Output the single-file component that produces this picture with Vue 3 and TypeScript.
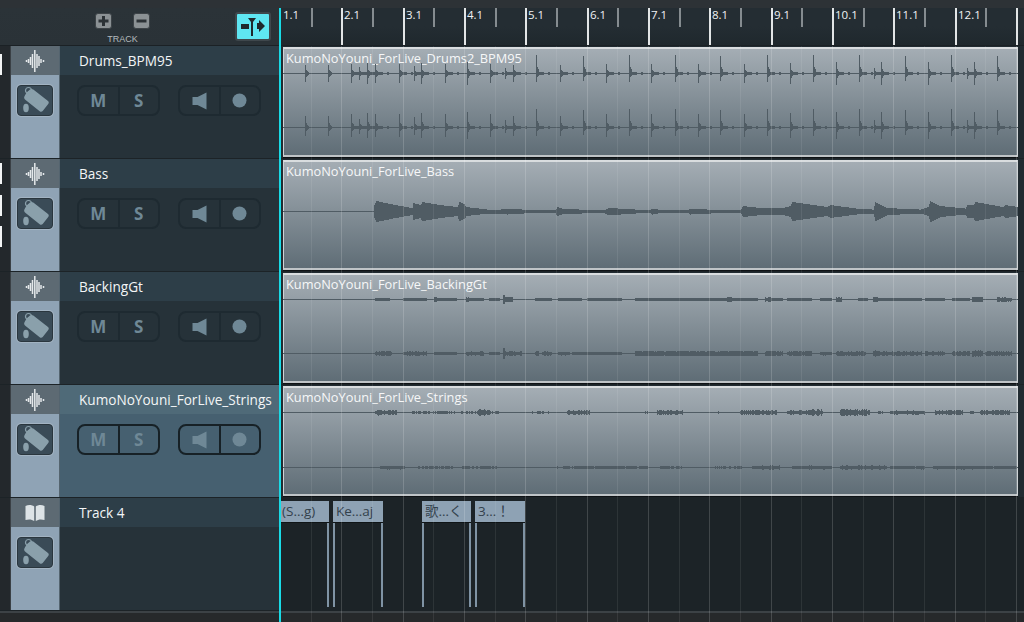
<script setup lang="ts">
type Seg = [number, number, number]
type Hit = [number, number]

const CLIP_X = 283
const CLIP_END = 1018
const BAR = 61.333

let seed = 7
const noise = (): number => {
  seed = (seed * 1103515245 + 12345) & 0x7fffffff
  return seed / 0x7fffffff
}

const toPath = (center: number, up: number[], down: number[] = up): string => {
  let d = `M0 ${center + 0.5}H${CLIP_END - CLIP_X}`
  up.forEach((a, i) => {
    const b = down[i]
    if (a >= 0.6 || b >= 0.6) d += `M${i + 0.5} ${(center - a).toFixed(1)}V${(center + b + 1).toFixed(1)}`
  })
  return d
}

const blank = (): number[] => new Array(CLIP_END - CLIP_X).fill(0)

const segWave = (center: number, segs: Seg[], scale: number, rough = 0.35): string => {
  const amps = blank()
  for (const [a, b, amp] of segs) {
    for (let x = a; x < b && x < CLIP_END; x++) {
      amps[x - CLIP_X] = Math.max(amps[x - CLIP_X], amp * scale * (1 - rough + noise() * rough * 2))
    }
  }
  return toPath(center, amps)
}

const envWave = (center: number, pts: Hit[]): string => {
  const amps = blank()
  for (let i = 0; i < pts.length - 1; i++) {
    const [x0, a0] = pts[i]
    const [x1, a1] = pts[i + 1]
    for (let x = x0; x < x1; x++) {
      if (x >= CLIP_X && x < CLIP_END) amps[x - CLIP_X] = a0 + ((a1 - a0) * (x - x0)) / (x1 - x0)
    }
  }
  return toPath(center, amps)
}

const hitWave = (center: number, hits: Hit[], low: number): string => {
  const up = blank()
  const down = blank()
  const put = (x: number, u: number, d: number) => {
    const i = x - CLIP_X
    if (i >= 0 && i < up.length) {
      up[i] = Math.max(up[i], u)
      down[i] = Math.max(down[i], d)
    }
  }
  hits.forEach(([x, a]) => {
    const strong = a >= 12
    const u = strong ? a * 1.4 : a * low
    const d = strong ? a * 0.62 : a * (low > 1 ? 0.95 : 1)
    put(x, u, d)
    put(x + 1, u * 0.35, d * 0.35)
    put(x + 2, u * 0.22, d * 0.22)
    put(x + 3, 1, 1)
    if (x >= 351) {
      for (let k = 4; k < 8; k++) put(x + k, 0.8, 0.8)
      put(x + 12, 0.8, 0.8)
      put(x + 13, 0.8, 0.8)
    }
  })
  return toPath(center, up, down)
}

const drumHits: Hit[] = [
  [305, 8], [328, 8], [351, 9], [359, 6], [367, 10], [375, 9], [399, 9], [414, 7], [421, 10], [445, 9],
  [467, 11], [490, 9], [505, 5], [513, 8], [536, 13], [560, 8], [583, 12], [606, 9], [629, 13], [651, 9],
  [675, 13], [698, 9], [720, 12], [744, 9], [767, 13], [790, 10], [813, 13], [836, 11], [859, 13], [874, 5],
  [881, 11], [905, 12], [928, 11], [951, 13], [967, 5], [974, 11], [997, 12],
]

const bassEnv: Hit[] = [
  [373, 0], [374, 6], [376, 10], [395, 6], [412, 3], [413, 8], [420, 6], [422, 9], [440, 6], [457, 4],
  [459, 9], [464, 7], [466, 4], [487, 1.5], [500, 1.5], [507, 2.5], [530, 1], [555, 1], [557, 4], [563, 2],
  [597, 1], [605, 1.5], [608, 3], [630, 2], [640, 1], [650, 1], [652, 2.5], [660, 1], [688, 1], [690, 2.5],
  [707, 1.5], [740, 1], [743, 5], [760, 3], [783, 3], [790, 5], [792, 9], [827, 4], [830, 6], [837, 5],
  [860, 2], [873, 1.5], [875, 9], [887, 3], [920, 1.5], [928, 4], [930, 10], [940, 5], [965, 2.5], [967, 6],
  [973, 6], [975, 9], [1003, 4], [1005, 6], [1018, 4],
]

const gt1: Seg[] = [
  [375, 390, 1], [403, 427, 1], [434, 437, 2.5], [437, 457, 1], [466, 470, 2], [470, 484, 1], [489, 500, 1],
  [503, 505, 5], [505, 513, 2.5], [535, 552, 1], [558, 582, 1], [587, 622, 1], [635, 688, 1.2], [688, 727, 1.2],
  [727, 732, 3], [732, 758, 1.2], [765, 772, 2], [772, 783, 1], [787, 812, 1], [820, 832, 1.5], [836, 842, 2],
  [858, 868, 1], [873, 878, 2.5], [878, 922, 1], [925, 945, 1], [952, 970, 1.2], [972, 983, 2.5], [997, 1012, 2],
]
const gt2: Seg[] = [
  [375, 392, 2], [403, 427, 2], [434, 457, 1.6], [466, 484, 2], [489, 500, 1.6], [503, 505, 6], [505, 522, 2],
  [535, 539, 2], [542, 552, 2], [558, 570, 2], [572, 622, 1.6], [635, 688, 2.4], [688, 758, 2.4], [765, 783, 2.4],
  [787, 812, 2.2], [820, 832, 1.8], [836, 866, 2], [873, 878, 3], [878, 922, 2], [925, 945, 2.2], [952, 970, 2],
  [972, 983, 3], [985, 1012, 2],
]
const st1: Seg[] = [
  [375, 397, 2.5], [410, 430, 1], [432, 455, 1], [460, 478, 1], [478, 490, 3], [490, 500, 1], [532, 553, 0.9],
  [567, 590, 2.2], [645, 648, 1], [657, 683, 2], [718, 719, 2], [740, 777, 2], [787, 823, 1.8], [808, 822, 3],
  [840, 870, 3.2], [877, 883, 1.5], [890, 925, 1.6], [935, 963, 2.2], [970, 974, 1.5], [980, 1010, 2.4],
]
const st2: Seg[] = [
  [380, 405, 1.8], [417, 453, 1.2], [462, 478, 1.2], [480, 497, 1.5], [557, 558, 1], [563, 623, 1.6], [623, 648, 1.5],
  [660, 682, 1.5], [715, 742, 1.4], [752, 780, 2], [792, 832, 1.8], [840, 887, 2], [890, 925, 1.8], [933, 1017, 1.8],
]

interface Track {
  name: string
  clip?: string
  waves?: string[]
  selected?: boolean
  tabs?: number[]
}

const tracks: Track[] = [
  {
    name: 'Drums_BPM95',
    clip: 'KumoNoYouni_ForLive_Drums2_BPM95',
    waves: [hitWave(26, drumHits, 1), hitWave(80, drumHits, 1.4)],
    tabs: [8],
  },
  {
    name: 'Bass',
    clip: 'KumoNoYouni_ForLive_Bass',
    waves: [envWave(51, bassEnv)],
    tabs: [4, 36, 67],
  },
  {
    name: 'BackingGt',
    clip: 'KumoNoYouni_ForLive_BackingGt',
    waves: [segWave(26, gt1, 0.8, 0.15), segWave(80, gt2, 0.75, 0.2)],
  },
  {
    name: 'KumoNoYouni_ForLive_Strings',
    clip: 'KumoNoYouni_ForLive_Strings',
    waves: [segWave(26, st1, 0.7, 0.45), segWave(81, st2, 0.6, 0.45)],
    selected: true,
  },
  { name: 'Track 4' },
]

const cues = [
  { text: '(S…g)', left: 0, width: 50 },
  { text: 'Ke…aj', left: 54, width: 50 },
  { text: '歌…く', left: 143, width: 49 },
  { text: '3…！', left: 196, width: 50 },
]

const rulerOrigin = 279
const ticks = Array.from({ length: 13 }, (_, i) => ({
  label: i < 12 ? `${i + 1}.1` : '',
  major: i > 0,
  left: Math.round(1 + BAR * i),
  half: Math.round(1 + BAR * i + BAR / 2),
}))
const grid = Array.from({ length: 25 }, (_, i) => ({
  left: Math.round(rulerOrigin + 1 + (BAR / 2) * i),
  major: i % 2 === 0,
}))
</script>

<template>
  <div class="app">
    <div class="topline"></div>
    <header class="head">
      <div class="tools">
        <div class="track-tools">
          <div class="tool-icons">
            <svg class="tool" width="17" height="16" viewBox="0 0 17 16">
              <rect x="0.5" y="0.5" width="16" height="15" rx="2.5" fill="#8b9194" stroke="#3d4347" />
              <path d="M8.5 3v10M3.5 8h10" stroke="#2c3236" stroke-width="3" />
            </svg>
            <svg class="tool" width="17" height="16" viewBox="0 0 17 16">
              <rect x="0.5" y="0.5" width="16" height="15" rx="2.5" fill="#8b9194" stroke="#3d4347" />
              <path d="M3.5 8h10" stroke="#2c3236" stroke-width="3" />
            </svg>
          </div>
          <span class="tool-label">TRACK</span>
        </div>
        <button class="snap" type="button" aria-label="Snap">
          <svg width="26" height="20" viewBox="0 0 26 20">
            <path d="M1 7h8v5H1z" fill="#20282c" />
            <path d="M8 1h8l-3 4v14h-2V5z" fill="#20282c" />
            <path d="M17 6h2V3l6 6-6 6v-3h-2z" fill="#20282c" />
          </svg>
        </button>
      </div>
      <div class="ruler">
        <template v-for="t in ticks" :key="t.left">
          <i v-if="t.major" class="tick major" :style="{ left: t.left + 'px' }"></i>
          <i class="tick minor" :style="{ left: t.half + 'px' }"></i>
          <span v-if="t.label" class="bar-label" :style="{ left: t.left + 3 + 'px' }">{{ t.label }}</span>
        </template>
      </div>
    </header>

    <main class="tracks">
      <section v-for="tr in tracks" :key="tr.name" class="track" :class="{ selected: tr.selected }">
        <div class="gutter">
          <i v-for="top in tr.tabs ?? []" :key="top" class="gutter-tab" :style="{ top: top + 'px' }"></i>
        </div>
        <div class="strip">
          <div class="strip-head">
            <svg v-if="tr.clip" width="20" height="22" viewBox="0 0 20 22">
              <path
                d="M1.5 10v2M3.5 9v4M5.5 7v8M7.5 4v14M9.8 0v22M12 4v14M14 6v10M16 9v4M18.5 10v2"
                stroke="#e4e8ea"
                stroke-width="1.5"
                fill="none"
              />
            </svg>
            <svg v-else width="20" height="17" viewBox="0 0 20 17">
              <path d="M0.5 2C3.5 0.5 7 0.8 9.2 2.5V17C7 15.2 3.5 15 0.5 16z" fill="#dde3e6" />
              <path d="M19.5 2C16.5 0.5 13 0.8 10.8 2.5V17C13 15.2 16.5 15 19.5 16z" fill="#dde3e6" />
            </svg>
          </div>
          <div class="strip-body">
            <div class="tag">
              <svg width="36" height="31" viewBox="0 0 36 31">
                <path
                  d="M9.5 7.5 13 4.5c1-.8 2.300-.8 3.300.1L31 16c1 .8 1 2 .2 3l-5.500 7c-.8 1-2 1.100-3 .3L8 14.500c-.9-.8-1.100-2-.6-3z"
                  fill="#8aa0ab"
                />
                <circle cx="11.500" cy="5.500" r="3" fill="none" stroke="#8aa0ab" stroke-width="1.200" />
                <ellipse cx="9" cy="23" rx="2.800" ry="4.200" fill="#8aa0ab" />
              </svg>
            </div>
          </div>
        </div>
        <div class="panel">
          <div class="panel-head">{{ tr.name }}</div>
          <div v-if="tr.clip" class="controls">
            <div class="group">
              <span class="ctl letter">M</span>
              <span class="ctl letter">S</span>
            </div>
            <div class="group">
              <span class="ctl">
                <svg width="15" height="18" viewBox="0 0 15 18">
                  <path d="M0.500 5H5.500L14.500 0.500V17.500L5.500 13H0.500z" fill="#6f8896" />
                </svg>
              </span>
              <span class="ctl">
                <svg width="15" height="15" viewBox="0 0 15 15">
                  <circle cx="7.500" cy="7.500" r="7" fill="#6f8896" />
                </svg>
              </span>
            </div>
          </div>
        </div>
        <div class="lane" :class="{ 'lane-cue': !tr.clip }">
          <div v-if="tr.clip" class="clip">
            <span class="clip-name">{{ tr.clip }}</span>
            <svg class="wave" width="735" height="110" viewBox="0 0 735 110">
              <path
                v-for="(d, i) in tr.waves"
                :key="i"
                :d="d"
                stroke="#505c64"
                stroke-width="1"
                fill="none"
                shape-rendering="crispEdges"
              />
            </svg>
          </div>
          <template v-else>
            <div
              v-for="c in cues"
              :key="c.text"
              class="cue"
              :style="{ left: c.left + 'px', width: c.width + 'px' }"
            >
              <span class="cue-name">{{ c.text }}</span>
            </div>
          </template>
        </div>
      </section>
    </main>
    <footer class="foot"></footer>

    <div class="gridlines">
      <i
        v-for="g in grid"
        :key="g.left"
        class="gridline"
        :class="{ strong: g.major }"
        :style="{ left: g.left + 'px' }"
      ></i>
    </div>
    <div class="playhead"></div>
  </div>
</template>

<style scoped>
.app {
  position: relative;
  width: 1024px;
  height: 622px;
  overflow: hidden;
  display: flex;
  flex-direction: column;
  background: #23292d;
  font-family: "Open Sans", "Noto Sans CJK JP", sans-serif;
  color: #eef1f2;
}
.topline {
  height: 8px;
  background: #2d3236;
}
.head {
  display: flex;
  border-bottom: 1px solid #1b2125;
  height: 37px;
  box-sizing: content-box;
}
.tools {
  width: 279px;
  flex: none;
  display: flex;
  background: linear-gradient(#2b3338, #2a3237);
}
.track-tools {
  margin-left: 95px;
  width: 55px;
  display: flex;
  flex-direction: column;
  align-items: center;
  padding-top: 5px;
}
.tool-icons {
  width: 100%;
  display: flex;
  justify-content: space-between;
}
.tool {
  display: block;
}
.tool-label {
  margin-top: 5px;
  font-size: 9px;
  line-height: 11px;
  color: #b4babd;
  font-family: "Liberation Sans", sans-serif;
}
.snap {
  margin: 4px 0 0 85px;
  width: 36px;
  height: 29px;
  padding: 0;
  display: flex;
  align-items: center;
  justify-content: center;
  background: #5fe6f2;
  border: 2px solid #3f474c;
  border-radius: 3px;
}
.ruler {
  position: relative;
  flex: 1;
  background: linear-gradient(#242d33 0 49%, #1f282d 100%);
}
.tick {
  position: absolute;
  top: 0;
  width: 2px;
}
.tick.major {
  height: 37px;
  background: #e2e5e6;
}
.tick.minor {
  height: 19px;
  background: #858c90;
}
.bar-label {
  position: absolute;
  top: -1px;
  font-size: 11.5px;
  line-height: 16px;
  color: #f0f2f3;
}
.tracks {
  display: flex;
  flex-direction: column;
}
.track {
  display: flex;
  height: 113px;
  border-bottom: 1px solid #1c2327;
  box-sizing: border-box;
}
.gutter {
  position: relative;
  width: 10px;
  flex: none;
  background: #23282c;
  border-right: 1px solid #3a4045;
  box-sizing: content-box;
}
.gutter-tab {
  position: absolute;
  left: 0;
  width: 2px;
  height: 21px;
  background: #f2f4f5;
}
.strip {
  width: 48px;
  flex: none;
  display: flex;
  flex-direction: column;
  border-right: 1px solid #54646f;
}
.strip-head {
  height: 29px;
  flex: none;
  display: flex;
  align-items: center;
  justify-content: center;
  background: #5d6a73;
}
.strip-body {
  flex: 1;
  background: #8fa3b5;
  padding: 10px 0 0 6px;
}
.tag {
  width: 36px;
  height: 31px;
  box-sizing: border-box;
  background: #3a4b57;
  border: 1px solid #2a363e;
  border-radius: 4px;
  box-shadow: 0 0 0 1px #a2b3c2;
  overflow: hidden;
}
.tag svg {
  display: block;
  margin: -1px;
}
.panel {
  width: 219px;
  flex: none;
  background: #263239;
  display: flex;
  flex-direction: column;
}
.panel-head {
  height: 29px;
  flex: none;
  box-sizing: border-box;
  padding: 0 0 0 19px;
  background: #2d3e48;
  font-size: 13.6px;
  line-height: 29px;
  white-space: nowrap;
  color: #f3f5f6;
}
.controls {
  display: flex;
  gap: 18px;
  padding: 10px 0 0 17px;
}
.group {
  display: flex;
  width: 83px;
  height: 31px;
  box-sizing: border-box;
  border: 2px solid #1e2a31;
  border-radius: 8px;
}
.ctl {
  flex: 1;
  display: flex;
  align-items: center;
  justify-content: center;
}
.ctl + .ctl {
  border-left: 2px solid #1e2a31;
}
.letter {
  font-size: 17px;
  font-weight: 700;
  color: #6f8896;
}
.selected .panel {
  background: #466070;
}
.selected .panel-head {
  background: #4f6a78;
}
.selected .group,
.selected .ctl + .ctl {
  border-color: #172126;
}
.lane {
  position: relative;
  flex: 1;
  background: #212b31;
  padding: 1px 6px 0 4px;
  min-width: 0;
}
.lane-cue {
  background: #1c2327;
  padding: 0;
}
.clip {
  position: relative;
  height: 110px;
  width: 735px;
  box-sizing: border-box;
  background: linear-gradient(#a4adb4, #5f6d76);
  border: 1px solid #cfd4d7;
  border-top: 2px solid #d9dddf;
  border-bottom: 2px solid #bfc4c7;
  box-shadow: 0 1px 0 #0e1215;
}
.clip-name {
  position: absolute;
  left: 2px;
  top: 1px;
  font-size: 12.8px;
  line-height: 17px;
  white-space: nowrap;
  color: #f6f7f8;
}
.wave {
  position: absolute;
  left: -1px;
  top: -2px;
}
.cue {
  position: absolute;
  top: 3px;
  height: 106px;
  box-sizing: border-box;
  border-left: 2px solid #7f93a4;
  border-right: 2px solid #7f93a4;
}
.cue-name {
  display: block;
  height: 22px;
  margin: 0 -2px;
  padding-left: 3px;
  background: #8ea2b4;
  border-bottom: 1px solid #0f1416;
  box-sizing: border-box;
  font-size: 13.5px;
  line-height: 21px;
  white-space: nowrap;
  color: #33414c;
}
.foot {
  flex: 1;
  background: #26292b;
  border-top: 2px solid #3c4246;
}
.gridlines {
  position: absolute;
  left: 0;
  top: 46px;
  bottom: 0;
  width: 1024px;
  pointer-events: none;
}
.gridline {
  position: absolute;
  top: 0;
  bottom: 0;
  width: 1px;
  background: rgba(255, 255, 255, 0.08);
}
.gridline.strong {
  background: rgba(255, 255, 255, 0.16);
}
.playhead {
  position: absolute;
  left: 279px;
  top: 8px;
  bottom: 0;
  width: 2px;
  background: #19dbe6;
}
</style>

<style>
html,
body {
  margin: 0;
  background: #23292d;
}
</style>
